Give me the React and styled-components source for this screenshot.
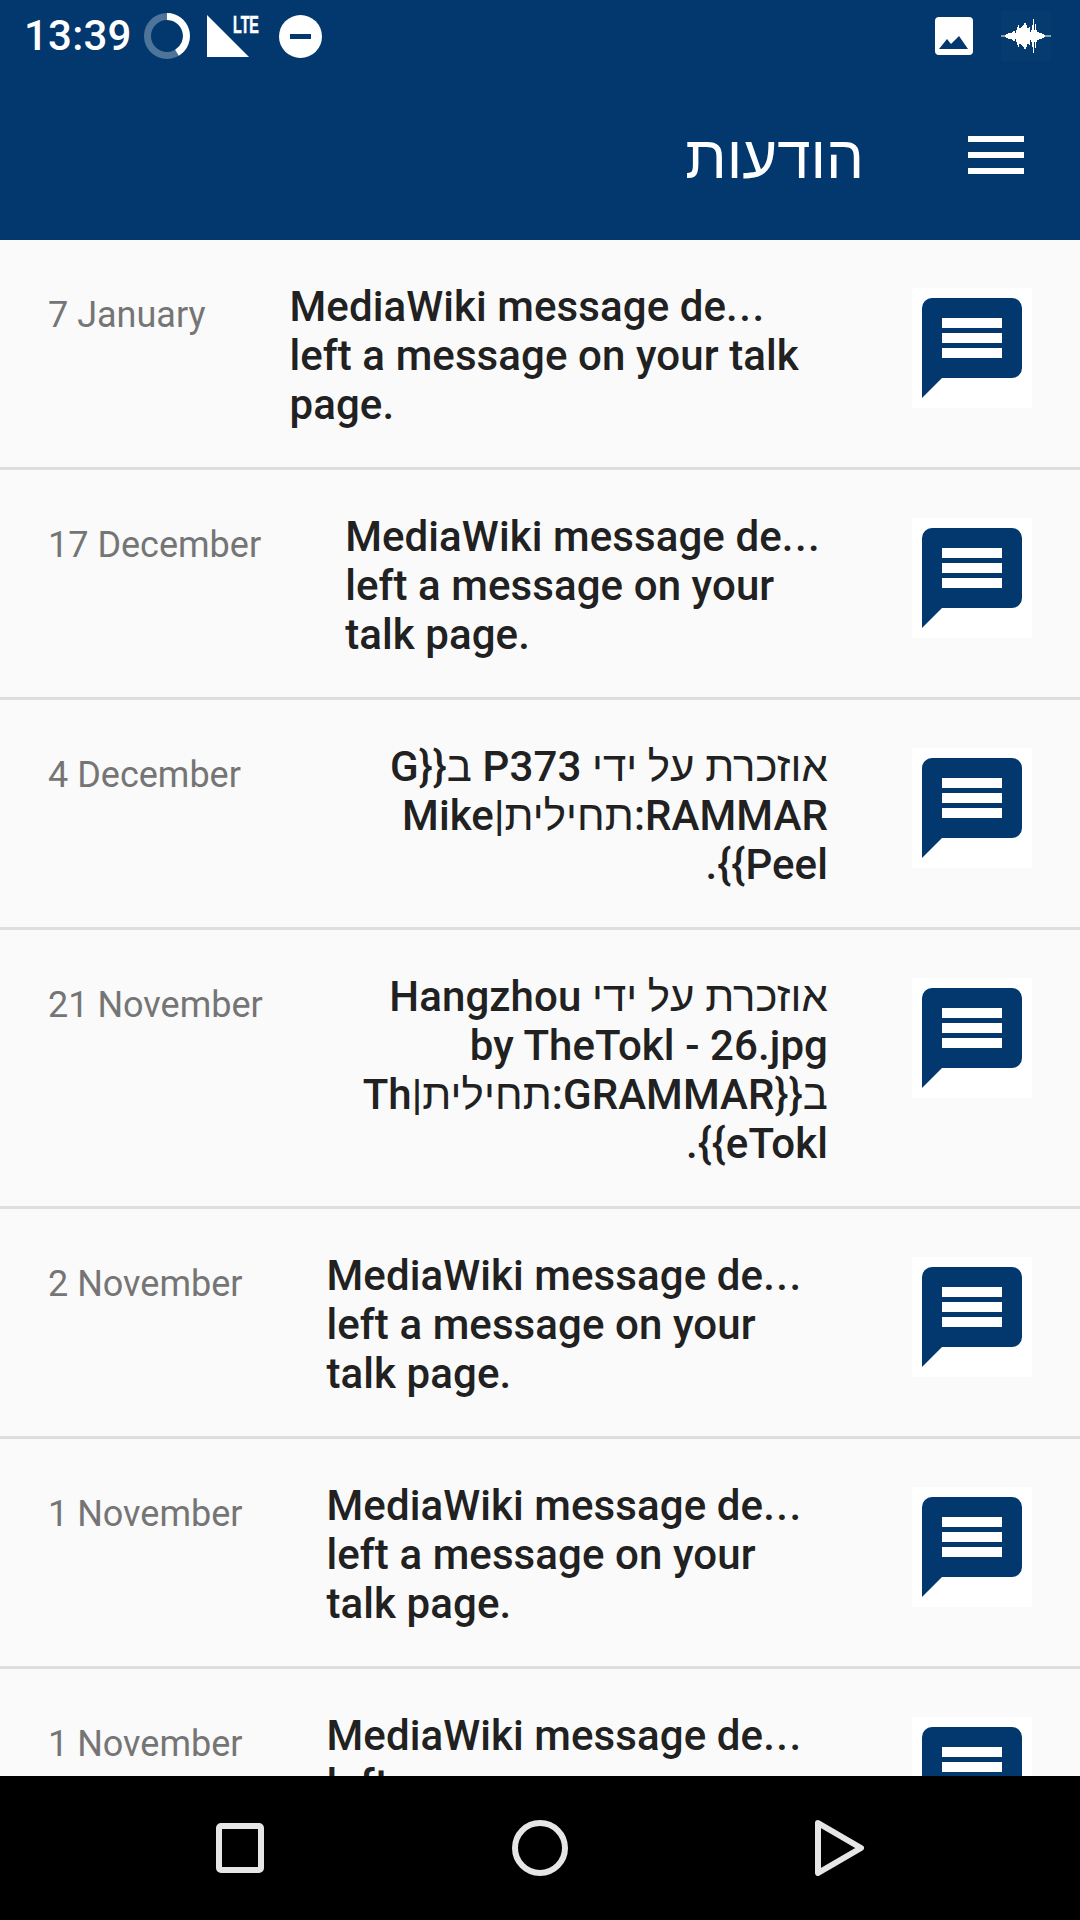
import React from 'react'
import styled, { createGlobalStyle } from 'styled-components'

const NAVY = '#02386e'

const GlobalStyle = createGlobalStyle`
  html, body {
    margin: 0;
    padding: 0;
    background: #fafafa;
  }
  * {
    box-sizing: border-box;
  }
`

const Screen = styled.div`
  width: 1080px;
  height: 1920px;
  display: flex;
  flex-direction: column;
  overflow: hidden;
  background: #fafafa;
  font-family: Roboto, 'Liberation Sans', sans-serif;
`

const Header = styled.header`
  flex: none;
  height: 240px;
  background: ${NAVY};
  color: #fff;
`

const StatusBar = styled.div`
  height: 72px;
  padding: 0 29px 0 24px;
  display: flex;
  align-items: center;
`

const Time = styled.span`
  font-size: 42px;
  font-weight: 500;
  line-height: 72px;
  letter-spacing: 0.2px;
  margin-right: 12px;
`

const StatusIcon = styled.svg`
  flex: none;
  display: block;
  margin-right: ${(p) => p.$gap || 0}px;
`

const Signal = styled.div`
  position: relative;
  width: 54px;
  height: 72px;
  margin: 0 18px 0 17px;
`

const LteLabel = styled.span`
  position: absolute;
  left: 26px;
  top: 12px;
  font-family: 'Liberation Sans', sans-serif;
  font-weight: 700;
  font-size: 23px;
  line-height: 26px;
  -webkit-text-stroke: 0.6px #fff;
  transform: scaleX(0.62);
  transform-origin: left center;
`

const Spacer = styled.div`
  flex: 1;
`

const Toolbar = styled.div`
  height: 168px;
  padding-right: 56px;
  display: flex;
  justify-content: flex-end;
  align-items: center;
  gap: 104px;
`

const Title = styled.h1`
  margin: 4px 0 0;
  font-size: 60px;
  font-weight: 400;
  line-height: 64px;
`

const MenuButton = styled.div`
  width: 56px;
  display: flex;
  flex-direction: column;
  gap: 10px;
  margin-top: -2px;
`

const MenuBar = styled.span`
  height: 6px;
  background: #fff;
`

const List = styled.main`
  flex: 1;
  min-height: 0;
  overflow: hidden;
`

const Row = styled.article`
  display: flex;
  align-items: flex-start;
  gap: 84px;
  padding: 42px 48px 38px 48px;
  border-bottom: 3px solid #dedede;
`

const DateLabel = styled.time`
  flex: none;
  margin-top: 9px;
  font-size: 36px;
  line-height: 49px;
  color: #757575;
  white-space: nowrap;
`

const Message = styled.p`
  flex: 1;
  min-width: 0;
  margin: 0;
  font-size: 42px;
  font-weight: 500;
  line-height: 49px;
  letter-spacing: 0.09px;
  color: #212121;
`

const Line = styled.span`
  display: block;
  white-space: nowrap;
`

const Dots = styled.span`
  letter-spacing: 1.5px;
`

const IconTile = styled.div`
  flex: none;
  width: 120px;
  height: 120px;
  margin-top: 6px;
  padding: 10px;
  background: #fff;
`

const NavBar = styled.nav`
  flex: none;
  height: 144px;
  background: #000;
  display: flex;
  align-items: center;
  padding-left: 213px;
  gap: 245px;
`

const NavIcon = styled.svg`
  flex: none;
  display: block;
  fill: none;
  stroke: #e6e6e6;
  stroke-width: 6;
  stroke-linejoin: round;
`

const MessageIcon = () => (
  <svg width='100' height='100' viewBox='0 0 100 100'>
    <path
      fill={NAVY}
      d='M10 0H90A10 10 0 0 1 100 10V70A10 10 0 0 1 90 80H20L0 100V10A10 10 0 0 1 10 0Z'
    />
    <path fill='#fff' d='M20 20H80V30H20ZM20 35H80V45H20ZM20 50H80V60H20Z' />
  </svg>
)

const waveAmps = [
  0.5, 0.5, 0.5, 0.5, 1, 2, 2, 3, 3, 3, 3, 4, 5, 5, 3, 6, 9, 11, 8, 8, 9, 10,
  11, 13, 13, 11, 8, 8, 9, 4, 6, 11, 17, 6, 12, 6, 4, 4, 3, 3, 3, 2, 2, 1, 0.5,
  0.5, 0.5, 0.5, 0.5, 0.5,
]

const wavePath = waveAmps
  .map((a, i) => `M${i} ${25 - a}H${i + 1}V${25 + a}H${i}Z`)
  .join('')

const wikiHead = (
  <>
    MediaWiki message de<Dots>...</Dots>
  </>
)

const rows = [
  {
    date: '7 January',
    lines: [wikiHead, 'left a message on your talk', 'page.'],
  },
  {
    date: '17 December',
    lines: [wikiHead, 'left a message on your', 'talk page.'],
  },
  {
    date: '4 December',
    rtl: true,
    lines: ['אוזכרת על ידי P373 ב{{G', 'RAMMAR:תחילית|Mike', 'Peel}}.'],
  },
  {
    date: '21 November',
    rtl: true,
    lines: [
      'אוזכרת על ידי Hangzhou',
      'by TheTokl - 26.jpg',
      'ב{{GRAMMAR:תחילית|Th',
      'eTokl}}.',
    ],
  },
  {
    date: '2 November',
    lines: [wikiHead, 'left a message on your', 'talk page.'],
  },
  {
    date: '1 November',
    lines: [wikiHead, 'left a message on your', 'talk page.'],
  },
  {
    date: '1 November',
    lines: [wikiHead, 'left a message on your', 'talk page.'],
  },
]

const App = () => (
  <Screen>
    <GlobalStyle />
    <Header>
      <StatusBar>
        <Time>13:39</Time>
        <StatusIcon width='46' height='46' viewBox='0 0 46 46'>
          <circle cx='23' cy='23' r='19.5' fill='none' stroke='#fff' strokeOpacity='0.3' strokeWidth='7' />
          <path d='M23 3.5A19.5 19.5 0 0 1 33 39.7' fill='none' stroke='#fff' strokeWidth='7' />
        </StatusIcon>
        <Signal>
          <StatusIcon width='42' height='72' viewBox='0 0 42 72'>
            <path fill='#fff' d='M0 15L42 57H0Z' />
          </StatusIcon>
          <LteLabel>LTE</LteLabel>
        </Signal>
        <StatusIcon width='43' height='43' viewBox='0 0 43 43'>
          <circle cx='21.5' cy='21.5' r='21.5' fill='#fff' />
          <rect x='11' y='19' width='21' height='5' fill={NAVY} />
        </StatusIcon>
        <Spacer />
        <StatusIcon $gap={28} width='38' height='38' viewBox='0 0 38 38'>
          <rect width='38' height='38' rx='4' fill='#fff' />
          <path fill={NAVY} d='M4 32L12 22L16 27L24 19L33 32Z' />
        </StatusIcon>
        <StatusIcon width='50' height='50' viewBox='0 0 50 50'>
          <rect width='50' height='50' fill='#fff' opacity='0.02' />
          <path fill='#fff' d={wavePath} />
        </StatusIcon>
      </StatusBar>
      <Toolbar>
        <Title>הודעות</Title>
        <MenuButton>
          <MenuBar />
          <MenuBar />
          <MenuBar />
        </MenuButton>
      </Toolbar>
    </Header>
    <List>
      {rows.map((row, i) => (
        <Row key={i}>
          <DateLabel>{row.date}</DateLabel>
          <Message dir={row.rtl ? 'rtl' : 'ltr'}>
            {row.lines.map((line, j) => (
              <Line key={j}>{line}</Line>
            ))}
          </Message>
          <IconTile>
            <MessageIcon />
          </IconTile>
        </Row>
      ))}
    </List>
    <NavBar>
      <NavIcon width='54' height='56' viewBox='0 0 54 56'>
        <rect x='6' y='6' width='42' height='44' rx='2' />
      </NavIcon>
      <NavIcon width='56' height='56' viewBox='0 0 56 56'>
        <circle cx='28' cy='28' r='25' />
      </NavIcon>
      <NavIcon width='52' height='56' viewBox='0 0 52 56'>
        <path d='M5 3L48 28L5 53Z' />
      </NavIcon>
    </NavBar>
  </Screen>
)

export default App
